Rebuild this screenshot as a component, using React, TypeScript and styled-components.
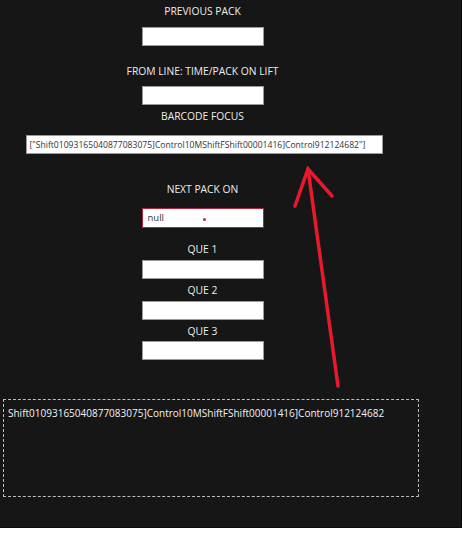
import React from "react";
import styled, { createGlobalStyle } from "styled-components";

const GlobalStyle = createGlobalStyle`
  html, body {
    margin: 0;
    padding: 0;
    background: #ffffff;
  }
`;

const BARCODE = "Shift01093165040877083075]Control10MShiftFShift00001416]Control912124682";

const Screen = styled.div`
  position: relative;
  width: 462px;
  height: 528px;
  background: #161616;
  border-right: 1px solid #0a0a0a;
  border-bottom: 1px solid #0a0a0a;
  font-family: "Open Sans", "Noto Sans", sans-serif;
  box-sizing: border-box;
  overflow: hidden;
`;

const Column = styled.div`
  width: 405px;
  display: flex;
  flex-direction: column;
  align-items: center;
  padding-top: 3px;
`;

interface ILabelProps {
  top?: number;
  bottom?: number;
}

const Label = styled.div<ILabelProps>`
  color: #ececec;
  font-size: 10.3px;
  line-height: 16px;
  margin-top: ${(props) => props.top ?? 0}px;
  margin-bottom: ${(props) => props.bottom ?? 3}px;
  white-space: nowrap;
`;

interface IFieldProps {
  wide?: boolean;
  alert?: boolean;
}

const Field = styled.input<IFieldProps>`
  box-sizing: border-box;
  width: ${(props) => (props.wide ? "357px" : "122px")};
  height: ${(props) => (props.alert ? "20px" : "19px")};
  margin: ${(props) => (props.wide ? "0 0 0 3px" : "0")};
  padding: ${(props) => (props.wide ? "0 3px" : "0 5px")};
  border: 1px solid ${(props) => (props.alert ? "#b8203c" : "#9a9a9a")};
  background: #ffffff;
  color: #333333;
  font-family: "Open Sans", "Noto Sans", sans-serif;
  font-size: ${(props) => (props.wide ? "8.6px" : "9.5px")};
  outline: none;
`;

const AlertWrap = styled.div`
  position: relative;
  height: 20px;
`;

const Dot = styled.span`
  position: absolute;
  left: 61px;
  top: 14px;
  width: 3px;
  height: 3px;
  border-radius: 50%;
  background: #d0203c;
`;

const LogBox = styled.div`
  box-sizing: border-box;
  width: 416px;
  height: 98px;
  margin: 39px 0 0 3px;
  padding: 6px 4px;
  border: 1px dashed #bdbdbd;
  color: #f2f2f2;
  font-size: 10px;
  line-height: 15px;
  white-space: nowrap;
`;

const Arrow = styled.svg`
  position: absolute;
  left: 0;
  top: 0;
  pointer-events: none;
`;

const App: React.FC = () => {
  return (
    <>
      <GlobalStyle />
      <Screen>
        <Column>
          <Label bottom={8}>PREVIOUS PACK</Label>
          <Field readOnly value="" />
          <Label top={17} bottom={7}>FROM LINE: TIME/PACK ON LIFT</Label>
          <Field readOnly value="" />
          <Label top={3} bottom={11}>BARCODE FOCUS</Label>
          <Field wide readOnly value={`["${BARCODE}"]`} />
          <Label top={27} bottom={7}>NEXT PACK ON</Label>
          <AlertWrap>
            <Field alert readOnly value="null" />
            <Dot />
          </AlertWrap>
          <Label top={17} bottom={3}>QUE 1</Label>
          <Field readOnly value="" />
          <Label top={3} bottom={3}>QUE 2</Label>
          <Field readOnly value="" />
          <Label top={3} bottom={2}>QUE 3</Label>
          <Field readOnly value="" />
        </Column>
        <LogBox>{BARCODE}</LogBox>
        <Arrow width="462" height="528" viewBox="0 0 462 528">
          <g stroke="#e8192c" strokeWidth="3.5" strokeLinecap="round" fill="none">
            <line x1="338" y1="386" x2="308" y2="169" />
            <polyline points="295,206 308,169 332,196" />
          </g>
        </Arrow>
      </Screen>
    </>
  );
};

export default App;
